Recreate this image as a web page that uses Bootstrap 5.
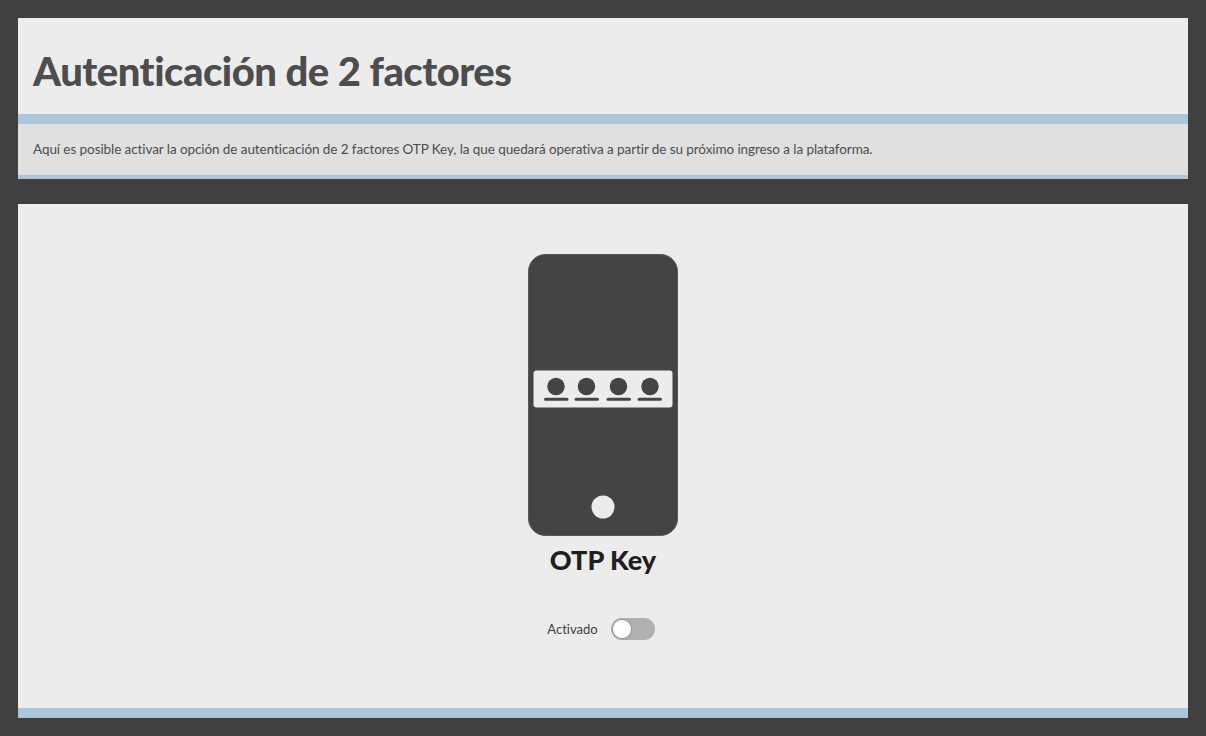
<!DOCTYPE html>
<html lang="es">
<head>
<meta charset="utf-8">
<title>Autenticación de 2 factores</title>
<link href="https://cdn.jsdelivr.net/npm/bootstrap@5.3.0/dist/css/bootstrap.min.css" rel="stylesheet">
<style>
html,body{height:100%}
body{background:#404040;font-family:Lato,"Liberation Sans",sans-serif;font-variant-ligatures:none;color:#4a4a4a;padding:18px;overflow:hidden}
.panel-head{background:#ececec;height:96px;padding:9px 15px 0}
.panel-head h1{font-size:40px;font-weight:900;color:#4d4d4d;margin:0;line-height:1;letter-spacing:-.5px}
.panel-desc{background:#e0e0e0;border-top:10px solid #adc6db;border-bottom:4px solid #adc6db;height:65px;padding:0 15px;font-size:13.5px;letter-spacing:-.08px;color:#4d4d4d}
.panel-main{background:#ececec;margin-top:25px;height:514px;border-bottom:10px solid #adc6db;padding-top:50px}
.phone-art{display:block;width:150px;height:282px}
.otp-name{font-size:27px;font-weight:900;color:#1f1f1f;line-height:34px;margin:7px 0 0}
.otp-switch{margin-top:41px;gap:13px;font-size:13px;color:#3f3f3f;padding:0;min-height:0}
.otp-switch .form-check-input{width:44px;height:22px;margin:0;float:none;background-color:#b0b0b0;border:0;border-radius:11px;background-image:radial-gradient(circle at 11px 11px,#fff 8.5px,#9c9c9c 9.5px,#b0b0b0 11px);background-size:22px 22px;background-repeat:no-repeat;background-position:left center;box-shadow:none}
.otp-switch .form-check-label{line-height:22px}
</style>
</head>
<body>
<section>
  <div class="panel-head d-flex align-items-center"><h1>Autenticación de 2 factores</h1></div>
  <div class="panel-desc d-flex align-items-center">Aquí es posible activar la opción de autenticación de 2 factores OTP Key, la que quedará operativa a partir de su próximo ingreso a la plataforma.</div>
</section>
<section class="panel-main d-flex flex-column align-items-center">
  <svg class="phone-art" viewBox="0 0 150 282" role="img" aria-label="Teléfono con clave OTP">
    <rect x=".5" y=".5" width="149" height="281" rx="17" fill="#444" stroke="#585858"/>
    <rect x="5.5" y="116.5" width="139" height="37" rx="3" fill="#ececec"/>
    <g fill="#444">
      <circle cx="28" cy="132.5" r="8.7"/><circle cx="58.5" cy="132.5" r="8.7"/><circle cx="90.5" cy="132.5" r="8.7"/><circle cx="122" cy="132.5" r="8.7"/>
    </g>
    <g stroke="#444" stroke-width="3" stroke-linecap="round">
      <path d="M17.5 145.3H39M48 145.3H69.5M80 145.3H101.5M111 145.3H132.5"/>
    </g>
    <circle cx="75" cy="253" r="11.5" fill="#ececec"/>
  </svg>
  <h2 class="otp-name text-center">OTP Key</h2>
  <div class="form-check form-switch otp-switch d-flex align-items-center me-1">
    <label class="form-check-label" for="otp-toggle">Activado</label>
    <input class="form-check-input" type="checkbox" role="switch" id="otp-toggle">
  </div>
</section>
<script src="https://cdn.jsdelivr.net/npm/bootstrap@5.3.0/dist/js/bootstrap.bundle.min.js"></script>
</body>
</html>
